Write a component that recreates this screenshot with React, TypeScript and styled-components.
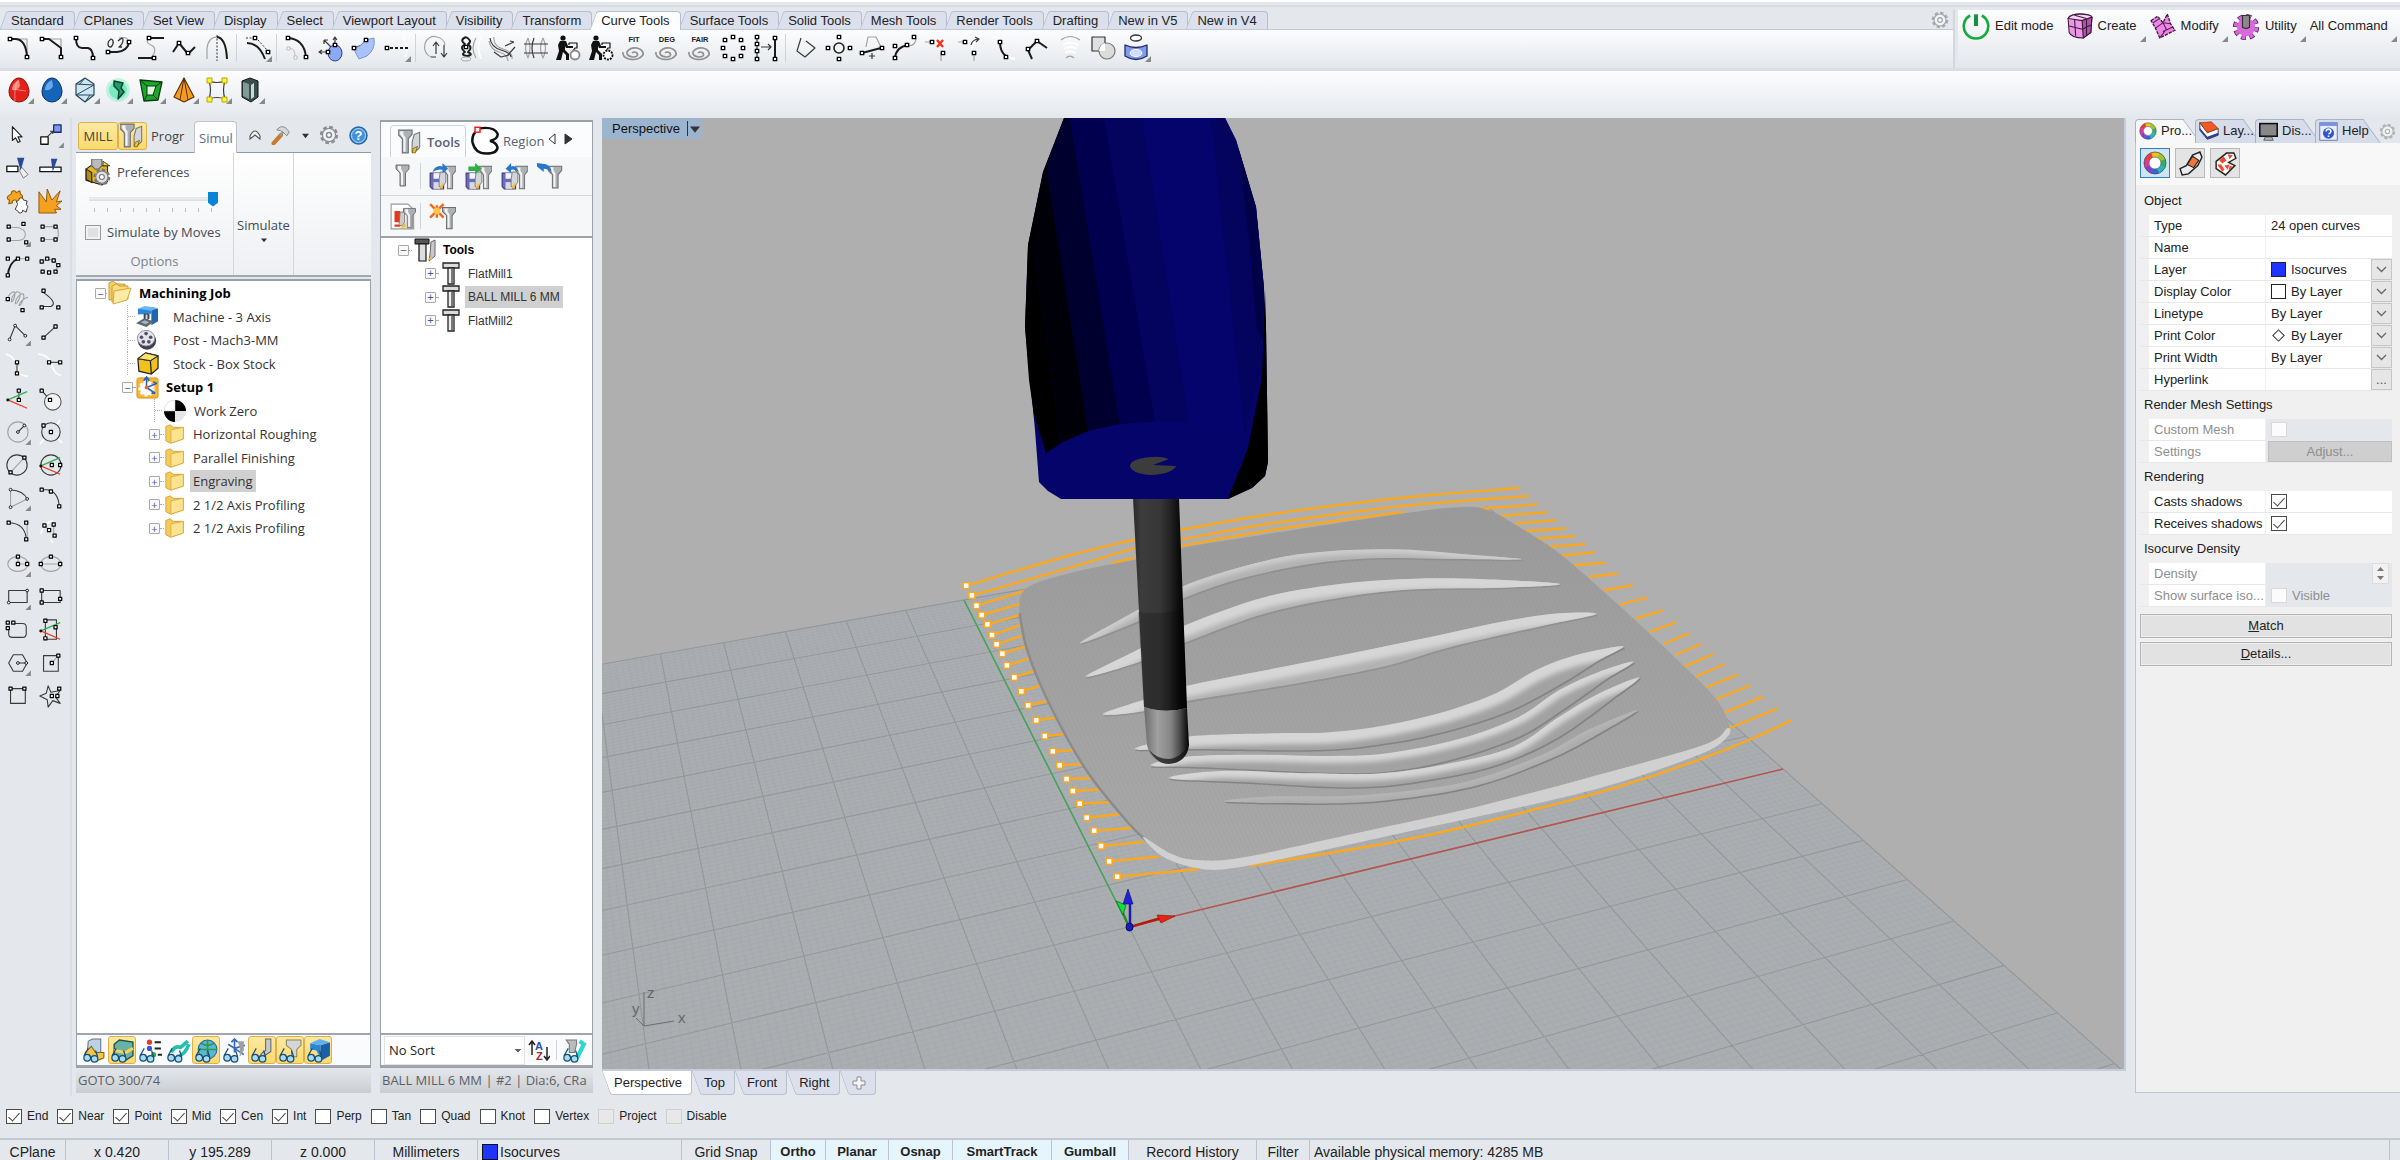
import React, { ReactNode } from "react";
import styled, { createGlobalStyle, css } from "styled-components";

const SANS = '"Liberation Sans", Arial, sans-serif';
const SEGOE = '"Open Sans", "Noto Sans", sans-serif';

const Global = createGlobalStyle`
  * { box-sizing: border-box; }
  body { margin: 0; background: #e4e8ed; color: #222; font: 13px/16px ${SANS}; }
  button, input, select { font: inherit; color: inherit; margin: 0; padding: 0; }
  button { background: none; border: 0; cursor: default; }
  ul { margin: 0; padding: 0; list-style: none; }
  svg { display: block; }
`;

/* ---------- layout ---------- */
const Page = styled.div`
  display: flex;
  flex-direction: column;
  min-height: 100vh;
  background: #e4e8ed;
`;
const TopBar = styled.header`
  display: flex;
  border-top: 2px solid #fff;
  border-bottom: 3px solid #d9dde5;
  padding-top: 8px;
  background: linear-gradient(#e4e8ed 3px, #d8dce4 3px, #d8dce4 5px, #e4e8ed 5px);
`;
const ToolTabsArea = styled.div`
  flex: 1;
  min-width: 0;
  border-right: 2px solid #d3d7df;
`;
const TabStrip = styled.div`
  display: flex;
  align-items: flex-end;
  height: 20px;
  padding-left: 1px;
  border-bottom: 1px solid #c3cad6;
`;
const StripGear = styled.button`
  margin-left: auto;
  margin-right: 4px;
`;
const ToolTab = styled.button<{ $on?: boolean }>`
  position: relative;
  height: 18px;
  padding: 1px 10px 0;
  white-space: nowrap;
  z-index: ${(p) => (p.$on ? 2 : 1)};
  &::before, &::after {
    content: "";
    position: absolute;
    top: 0;
    bottom: ${(p) => (p.$on ? "-1px" : "0")};
    z-index: -1;
    background: ${(p) => (p.$on ? "#fcfdfe" : "#dbe0ec")};
    border-top: 1px solid #b4bed0;
  }
  &::before { left: 2px; right: 12px; transform: skewX(-20deg); border-left: 1px solid #b4bed0; border-top-left-radius: 3px; }
  &::after { left: 12px; right: -1px; border-right: 1px solid #b4bed0; border-top-right-radius: 4px; }
`;
const ToolRow = styled.div`
  display: flex;
  align-items: center;
  height: 38px;
  padding: 0 0 3px 2px;
  background: linear-gradient(#fcfdfe, #e4e7ec);
`;
const IconButton = styled.button`
  display: grid;
  place-items: center;
  flex: none;
  width: 33px;
  height: 32px;
`;
const Divider = styled.span<{ $h?: number; $m?: number }>`
  flex: none;
  width: 1px;
  height: ${(p) => p.$h ?? 28}px;
  margin: 0 ${(p) => p.$m ?? 3}px;
  background: #cfd3da;
`;
const ActionArea = styled.div`
  display: flex;
  align-items: flex-start;
  gap: 13px;
  flex: none;
  width: 442px;
  margin-left: 3px;
  padding: 2px 0 0 4px;
  background: linear-gradient(#fcfdfe, #e4e7ec);
`;
const Action = styled.button<{ $menu?: boolean }>`
  position: relative;
  display: flex;
  align-items: center;
  gap: 5px;
  height: 28px;
  white-space: nowrap;
  &::after {
    content: "";
    display: ${(p) => (p.$menu ? "block" : "none")};
    position: absolute;
    right: -9px;
    bottom: -2px;
    border: 3px solid transparent;
    border-right-color: #888;
    border-bottom-color: #888;
  }
`;
const SolidRow = styled.div`
  display: flex;
  align-items: flex-start;
  height: 47px;
  padding: 3px 0 0 2px;
  background: linear-gradient(#fdfdfe, #e4e8ed);
`;
const Workspace = styled.main`
  display: flex;
  flex: 1;
  min-height: 0;
`;
const ToolColumn = styled.nav`
  display: grid;
  grid-template-columns: 33px 33px;
  grid-auto-rows: 33px;
  align-content: start;
  flex: none;
  width: 72px;
  border-right: 2px solid #d9dde4;
`;
const ToolCell = styled.button`
  display: grid;
  place-items: center;
`;
const Panel = styled.section<{ $w: number; $gap: number }>`
  display: flex;
  flex-direction: column;
  flex: none;
  width: ${(p) => p.$w}px;
  margin: 2px 0 3px ${(p) => p.$gap}px;
`;
const Frame = styled.div`
  display: flex;
  flex-direction: column;
  flex: 1;
  border: 1px solid #9aa0a8;
  border-top-width: 2px;
  background: #fff;
`;
const PanelStatus = styled.output`
  display: block;
  height: 25px;
  padding: 4px 2px;
  overflow: hidden;
  white-space: nowrap;
  font-family: ${SEGOE};
  color: #5c6066;
  background: linear-gradient(#e4e7eb, #cacdd1);
`;
const PanelTools = styled.div`
  display: flex;
  align-items: center;
  height: 34px;
  padding: 0 3px;
  border-top: 2px solid #a2a6ac;
  border-bottom: 2px solid #a2a6ac;
  background: #fafbfc;
`;

/* ---------- job panel ---------- */
const RibbonTabs = styled.div`
  display: flex;
  align-items: flex-end;
  height: 33px;
  padding: 0 3px 0 2px;
  font-family: ${SEGOE};
  color: #444;
  border-bottom: 1px solid #8d9bb0;
`;
const Toggle = styled.button<{ $on?: boolean; $w?: number }>`
  display: grid;
  place-items: center;
  width: ${(p) => p.$w ?? 28}px;
  height: 28px;
  margin-bottom: ${(p) => (p.$w ? 2 : 0)}px;
  ${(p) => p.$on && css`
    background: linear-gradient(#fde9a4, #fbd96b);
    border: 1px solid #dcb14c;
    border-radius: 3px;
  `}
`;
const RibbonTab = styled.button<{ $on?: boolean }>`
  width: 43px;
  height: 32px;
  padding: 0 3px 0 4px;
  text-align: left;
  margin-right: ${(p) => (p.$on ? 0 : 4)}px;
  ${(p) => p.$on && css`
    margin-bottom: -1px;
    color: #566b88;
    background: #fff;
    border: 1px solid #bcc3cf;
    border-bottom: 0;
    border-radius: 4px 4px 0 0;
  `}
`;
const RibbonIcons = styled.div`
  display: flex;
  align-items: center;
  justify-content: space-between;
  flex: 1;
  height: 34px;
  padding-left: 12px;
`;
const Ribbon = styled.div`
  display: flex;
  height: 124px;
  margin-bottom: 2px;
  font-family: ${SEGOE};
  color: #444b55;
  background: linear-gradient(#fff, #eef0f3);
  border-bottom: 2px solid #a3a9b2;
`;
const RibbonGroup = styled.div<{ $w: number }>`
  display: flex;
  flex-direction: column;
  align-items: center;
  gap: 4px;
  width: ${(p) => p.$w}px;
  padding-top: 64px;
  border-right: 1px solid #d4d8de;
`;
const OptionsGroup = styled(RibbonGroup)`
  align-items: flex-start;
  gap: 0;
  padding: 6px 0 0 9px;
`;
const Preferences = styled.button`
  display: flex;
  align-items: center;
  gap: 5px;
  height: 26px;
`;
const SliderBox = styled.div`
  width: 129px;
  margin: 5px 0 12px 4px;
`;
const Slider = styled.input`
  display: block;
  width: 100%;
  height: 18px;
  appearance: none;
  background: linear-gradient(transparent 7px, #d9dbde 7px, #eef0f1 8px, #d9dbde 11px, transparent 11px);
  &::-webkit-slider-thumb {
    appearance: none;
    width: 10px;
    height: 15px;
    background: #0a84d8;
    clip-path: polygon(0 0, 100% 0, 100% 75%, 50% 100%, 0 75%);
  }
`;
const Ticks = styled.div`
  display: flex;
  justify-content: space-between;
  padding: 0 6px 0 5px;
  i { width: 1px; height: 4px; background: #b9bcc0; }
`;
const CheckLabel = styled.label<{ $gap?: number }>`
  display: flex;
  align-items: center;
  gap: ${(p) => p.$gap ?? 5}px;
  white-space: nowrap;
`;
const OptionsTitle = styled.div`
  align-self: center;
  margin-top: 13px;
  padding-right: 9px;
  color: #7c838d;
`;
const Check = styled.input`
  position: relative;
  flex: none;
  appearance: none;
  width: 16px;
  height: 15px;
  border: 1px solid #4a4a4a;
  background: #fff;
  &:checked::after {
    content: "";
    position: absolute;
    left: 4px;
    top: 0;
    width: 5px;
    height: 10px;
    border: solid #444;
    border-width: 0 1px 1px 0;
    transform: rotate(42deg);
  }
  &:disabled { border-color: #cfcfcf; background: #e8e8e8; }
`;
const PaleCheck = styled(Check)`
  border-color: #96999e;
  box-shadow: inset 0 0 0 2px #f2f2f2;
  background: #dfe1e4;
`;
const WhiteCheck = styled(Check)`
  &:disabled { border-color: #d8d8d8; background: #fbfbfb; }
`;

/* ---------- trees ---------- */
const Tree = styled.ul`
  flex: 1;
  font-family: ${SEGOE};
  color: #333;
`;
const ToolTree = styled(Tree)`
  font-family: ${SANS};
  font-size: 12px;
`;
const TreeRow = styled.li<{ $in: number }>`
  display: flex;
  align-items: center;
  height: 24px;
  padding-left: ${(p) => p.$in}px;
  white-space: nowrap;
  &:nth-child(even) { height: 23px; }
`;
const Expander = styled.button`
  display: grid;
  place-items: center;
  flex: none;
  width: 11px;
  height: 11px;
  font-size: 11px;
  line-height: 9px;
  color: #3a5ba0;
  border: 1px solid #a9a9a9;
  border-radius: 1px;
  background: #fafafa;
`;
const Dots = styled.span<{ $w: number }>`
  flex: none;
  width: ${(p) => p.$w}px;
  margin-right: 1px;
  border-top: 1px dotted #aaa;
`;
const Guide = styled.span`
  align-self: stretch;
  flex: none;
  width: 0;
  border-left: 1px dotted #aaa;
`;
const TreeLabel = styled.span<{ $bold?: boolean; $sel?: boolean; $gap?: number }>`
  margin-left: ${(p) => p.$gap ?? 4}px;
  padding: 3px;
  font-weight: ${(p) => (p.$bold ? 700 : 400)};
  color: ${(p) => (p.$bold ? "#000" : "inherit")};
  background: ${(p) => (p.$sel ? "#d0d0d0" : "transparent")};
`;

/* ---------- tools panel ---------- */
const LibTabs = styled.div`
  display: flex;
  align-items: flex-end;
  height: 35px;
  padding-left: 9px;
  font-family: ${SEGOE};
  background: #fbfcfd;
`;
const LibTab = styled.button<{ $on?: boolean }>`
  display: flex;
  align-items: center;
  gap: 3px;
  width: ${(p) => (p.$on ? 76 : 82)}px;
  height: 32px;
  padding-left: ${(p) => (p.$on ? 7 : 4)}px;
  color: #566273;
  font-weight: ${(p) => (p.$on ? 600 : 400)};
  border: ${(p) => (p.$on ? "1px solid #cfd3d8" : "0")};
  border-bottom: 0;
  border-radius: 4px 4px 0 0;
`;
const LibArrows = styled.div`
  display: flex;
  align-items: center;
  gap: 7px;
  height: 36px;
`;
const LibRow = styled.div<{ $last?: boolean }>`
  display: flex;
  align-items: center;
  height: ${(p) => (p.$last ? 42 : 39)}px;
  padding-left: 8px;
  background: #f6f7f8;
  border-bottom: ${(p) => (p.$last ? "2px solid #a0a3a8" : "1px solid #d3d5d8")};
`;
const LibButton = styled.button<{ $w?: number }>`
  display: grid;
  place-items: center;
  width: ${(p) => p.$w ?? 36}px;
  height: 32px;
`;
const SortSelect = styled.select`
  width: 141px;
  height: 29px;
  padding: 0 4px;
  appearance: none;
  border: 1px solid #e0e2e5;
  background: linear-gradient(#666, #666) 130px 12px / 6px 1px no-repeat,
    linear-gradient(#666, #666) 131px 13px / 4px 1px no-repeat,
    linear-gradient(#666, #666) 132px 14px / 2px 1px no-repeat, #fff;
  font-family: ${SEGOE};
`;

/* ---------- viewport ---------- */
const ViewportColumn = styled.section`
  display: flex;
  flex-direction: column;
  flex: 1;
  min-width: 0;
  margin-left: 9px;
`;
const Viewport = styled.div`
  position: relative;
  flex: 1;
  min-height: 0;
  overflow: hidden;
  background: #afafaf;
  border-right: 2px solid #c5ccda;
  border-bottom: 2px solid #c5ccda;
  svg.scene { position: absolute; inset: 0; width: 100%; height: 100%; }
`;
const ViewTitle = styled.button`
  position: absolute;
  left: 0;
  top: 0;
  display: flex;
  align-items: center;
  gap: 7px;
  height: 21px;
  padding: 0 2px 0 10px;
  background: #9db4cf;
  color: #111;
`;
const ViewMenu = styled.span`
  display: grid;
  place-items: center;
  height: 15px;
  padding-left: 2px;
  border-left: 1px solid #333;
`;
const ViewTabs = styled.div`
  display: flex;
  height: 25px;
`;
const ViewTab = styled.button<{ $on?: boolean }>`
  position: relative;
  z-index: 1;
  height: 24px;
  padding: 0 10px 0 12px;
  &::before, &::after {
    content: "";
    position: absolute;
    top: 0;
    bottom: 0;
    z-index: -1;
    background: ${(p) => (p.$on ? "#fff" : "#dbe0ec")};
    border-bottom: 1px solid #b8c0ce;
  }
  &::before { left: 4px; right: 14px; transform: skewX(20deg); border-left: 1px solid #b8c0ce; border-bottom-left-radius: 3px; }
  &::after { left: 14px; right: 0; border-right: 1px solid #b8c0ce; border-bottom-right-radius: 4px; }
`;

/* ---------- property panel ---------- */
const PropPanel = styled.aside`
  display: flex;
  flex-direction: column;
  flex: none;
  width: 265px;
  margin: 1px 0 3px 9px;
`;
const PropTabs = styled.div`
  display: flex;
  align-items: stretch;
  height: 24px;
  overflow: hidden;
`;
const PropTab = styled.button<{ $on?: boolean }>`
  position: relative;
  z-index: 1;
  display: flex;
  align-items: center;
  gap: 4px;
  width: 60px;
  padding-left: 4px;
  white-space: nowrap;
  &::before, &::after {
    content: "";
    position: absolute;
    top: 0;
    bottom: 0;
    z-index: -1;
    background: ${(p) => (p.$on ? "#f8f8f8" : "#d6dcea")};
    border-top: 1px solid #a9b3c6;
  }
  &::before { left: 0; right: 14px; border-left: 1px solid #a9b3c6; border-top-left-radius: 4px; }
  &::after { left: 24px; right: 3px; transform: skewX(36deg); border-right: 1px solid #a9b3c6; }
`;
const PropBody = styled.div`
  display: flex;
  flex-direction: column;
  flex: 1;
  padding: 5px 8px 0 4px;
  border-left: 1px solid #bfc6d3;
  border-bottom: 1px solid #bfc6d3;
  background: linear-gradient(#f8f8f8 42px, #f0f0f0 42px);
`;
const PageButtons = styled.div`
  display: flex;
  gap: 5px;
  margin-bottom: 9px;
`;
const PageButton = styled.button<{ $on?: boolean }>`
  display: grid;
  place-items: center;
  width: 30px;
  height: 30px;
  background: ${(p) => (p.$on ? "#cfe4f5" : "#e4e4e4")};
  border: 1px solid ${(p) => (p.$on ? "#2f7fbd" : "#b8b8b8")};
`;
const GroupTitle = styled.h2`
  height: 28px;
  margin: 0;
  padding: 6px 4px;
  font: inherit;
  color: #222;
`;
const PropRow = styled.div<{ $off?: boolean }>`
  display: grid;
  grid-template-columns: 116px 1fr;
  gap: 1px;
  height: 22px;
  padding-left: 9px;
  border-bottom: 1px solid #e6e8ec;
  color: ${(p) => (p.$off ? "#8e8e8e" : "#222")};
`;
const PropName = styled.label`
  padding: 3px 5px 0;
  background: #fff;
  white-space: nowrap;
`;
const PropValue = styled.div<{ $off?: boolean }>`
  display: flex;
  align-items: center;
  gap: 5px;
  min-width: 0;
  padding-left: 5px;
  background: ${(p) => (p.$off ? "#e4e8ed" : "#fff")};
`;
const PropInput = styled.input`
  flex: 1;
  min-width: 0;
  border: 0;
  background: transparent;
  outline: none;
`;
const PropSelect = styled.select`
  flex: 1;
  min-width: 0;
  border: 0;
  appearance: none;
  background: transparent;
`;
const CellEnd = styled.span`
  display: grid;
  place-items: center;
  flex: none;
  align-self: stretch;
  width: 21px;
  background: #e6e6e6;
  border: 1px solid #c6c6c6;
`;
const CellButton = styled(CellEnd).attrs({ as: "button" })`
  margin-left: auto;
  color: #555;
  line-height: 10px;
`;
const Spin = styled(CellEnd)`
  width: 17px;
  margin-right: 3px;
  background: #f2f2f2;
  border-color: #ddd;
`;
const AdjustButton = styled.button`
  flex: 1;
  align-self: stretch;
  margin-left: -3px;
  background: #cfcfcf;
  border: 1px solid #c0c0c0;
`;
const Swatch = styled.span<{ $c: string }>`
  flex: none;
  width: 15px;
  height: 15px;
  background: ${(p) => p.$c};
  border: 1px solid #222;
`;
const Diamond = styled.span`
  flex: none;
  width: 9px;
  height: 9px;
  margin: 0 3px;
  border: 1px solid #333;
  transform: rotate(45deg);
`;
const PanelButtons = styled.div`
  display: grid;
  gap: 4px;
  padding-top: 7px;
`;
const WideButton = styled.button`
  height: 24px;
  background: #e2e2e2;
  border: 1px solid #b4b4b4;
  box-shadow: inset 0 0 0 1px #ededed;
`;

/* ---------- bottom ---------- */
const OsnapBar = styled.div`
  display: flex;
  align-items: center;
  gap: 9px;
  height: 42px;
  padding: 0 6px 2px;
  font-size: 12px;
`;
const StatusBar = styled.footer`
  display: flex;
  height: 22px;
  border-top: 2px solid #c3c8d3;
  font-size: 14px;
  line-height: 24px;
`;
const StatusCell = styled.button<{ $w?: number; $on?: boolean; $left?: boolean }>`
  display: flex;
  align-items: flex-start;
  justify-content: ${(p) => (p.$left ? "flex-start" : "center")};
  gap: 2px;
  flex: ${(p) => (p.$w ? "none" : "1")};
  width: ${(p) => (p.$w ? `${p.$w}px` : "auto")};
  padding: 0 4px;
  overflow: hidden;
  white-space: nowrap;
  line-height: 24px;
  font-size: ${(p) => (p.$on ? 13 : 14)}px;
  font-weight: ${(p) => (p.$on ? 700 : 400)};
  background: ${(p) => (p.$on ? "#e6f4fb" : "transparent")};
  border-right: 1px solid #bcc2cf;
`;
const StatusEnd = styled.span`
  width: 10px;
`;
const StatusSwatch = styled.span`
  width: 16px;
  height: 16px;
  margin-top: 4px;
  background: #1f35ff;
  border: 1px solid #111;
`;

/* ---------- line icons ---------- */
type Glyph = {
  n: string;
  k?: string; // black strokes
  t?: string; // thick strokes
  g?: string; // grey strokes
  w?: string; // white strokes
  d?: string; // dashed strokes
  q?: number[][]; // control points
  e?: ReactNode;
  c?: boolean; // has a fly-out
};
const sep = { n: "|" };

const LineIcon = ({ i, size = 26 }: { i: Glyph; size?: number }) => (
  <svg width={size} height={size} viewBox="0 0 26 26" fill="none" strokeLinejoin="round" overflow="visible">
    {i.w && <path d={i.w} stroke="#fff" strokeWidth={1.8} />}
    {i.g && <path d={i.g} stroke="#a2a2a2" strokeWidth={1.2} />}
    {i.d && <path d={i.d} stroke="#333" strokeDasharray="2 1.5" />}
    {i.k && <path d={i.k} stroke="#3a3a3a" strokeWidth={1.2} />}
    {i.t && <path d={i.t} stroke="#1c1c1c" strokeWidth={2} />}
    {i.e}
    {i.q?.map(([x, y]) => (
      <rect key={`${x},${y}`} x={x - 1.7} y={y - 1.7} width={3.4} height={3.4} fill="#fff" stroke="#000" strokeWidth={1.3} />
    ))}
    {i.c && <path d="M28 21V27H22Z" fill="#888" />}
  </svg>
);

const spiral = (word: string): ReactNode => (
  <>
    <text x="13" y="7" fontSize="7.5" fontWeight="700" textAnchor="middle" fill="#222" fontFamily={SANS}>{word}</text>
    <path d="M11 18Q13 16 16 18Q18 22 12 22Q5 21 6 17Q9 12 16 13Q23 15 22 20Q17 26 8 24Q1 22 2 17" stroke="#8f8f8f" strokeWidth="1.7" />
  </>
);
const walker = (loop: boolean): ReactNode => (
  <>
    <circle cx="8" cy="3" r="2.6" fill="#111" />
    <path d="M5 6H11L13 11H18V13H11L10 11V15L14 19V25H11V20L8 17L6 25H1L4 16L3 10Z" fill="#111" />
    <path d="M14 10V8H22V13H20L18 16" stroke="#111" strokeWidth="1.2" />
    <circle cx="20" cy="20" r="4.5" fill="#fff" stroke={loop ? "#111" : "#888"} strokeWidth="1.8" strokeDasharray={loop ? "2 1" : undefined} />
  </>
);

const CURVE_TOOLS: Glyph[] = [
  { n: "Fillet curves", g: "M4 4H21V22", t: "M4 4H10Q20 5 21 22", q: [[4, 4], [21, 22]] },
  { n: "Chamfer curves", g: "M4 4H22V22", t: "M3 4H10L22 13V22", q: [[3, 4], [22, 22]] },
  { n: "Blend curves", t: "M4 3Q4 13 10 13H16Q21 14 21 23", q: [[4, 3], [21, 23]] },
  { n: "Arc blend", g: "M14 3Q23 1 24 7", t: "M5 17H12Q22 16 24 8", q: [[3, 17], [24, 7]], e: <path d="M5 5Q7 3 8 6T6 12Q3 12 3 9T5 5M13 6Q18 1 18 5T14 12H17" stroke="#333" strokeWidth="1.3" /> },
  { n: "Adjustable blend", g: "M12 3Q6 7 13 10T14 22", t: "M10 3H26M0 23H16", q: [[11, 3], [16, 23]] },
  { n: "Match curve", t: "M2 17L8 8L17 19L24 12", q: [[8, 8], [17, 18]] },
  { n: "Symmetry", g: "M3 24V14Q4 2 13 2", d: "M13 0V26", t: "M13 2Q22 3 23 24" },
  sep,
  { n: "Extend curve", d: "M2 3H12M14 5L24 16", t: "M3 8Q15 8 21 24", q: [[11, 3], [24, 17]], c: true },
  sep,
  { n: "Offset curve", t: "M4 3Q20 4 22 22", q: [[4, 3], [22, 22]], e: <><path d="M5 13Q11 13 11 21" stroke="#bbb" /><path d="M3 12h3v3h-3zM10 21h3v3h-3z" stroke="#bbb" fill="#fff" /></> },
  { n: "Offset normal", k: "M14 12L7 5M7 5V9M7 5H11M18 9V3M16 5L18 2L20 5M10 17H3M5 15L2 17L5 19", e: <ellipse cx="18" cy="18" rx="7" ry="8" fill="#8caaf4" stroke="#2d3f8a" />, q: [[18, 10], [11, 17]] },
  { n: "Curve from surface", e: <path d="M3 13Q12 12 15 5L24 3Q26 14 17 21L9 24Z" fill="#a9c2fa" stroke="#7f95cc" />, t: "M4 13Q13 12 16 5", q: [[4, 13], [16, 5]] },
  { n: "Dashed extend", w: "M20 2Q27 12 22 22", t: "M7 13H10M12 13H15M17 13H20M22 13H25", q: [[4, 13]], c: true },
  sep,
  { n: "Close curve", g: "M14 2A9 10 0 1 0 8 22M14 2A10 9 0 0 1 22 10", k: "M13 19V8M10 11L13 7L16 11M21 10V21M18 18L21 22L24 18M8 22H13" },
  { n: "Cross-section", g: "M20 3Q14 13 20 23", w: "M25 2Q20 13 25 24", t: "M10 2Q3 5 9 9Q3 13 9 17Q4 20 11 21Q18 20 12 17Q17 13 12 9Q17 6 10 2", e: <ellipse cx="10" cy="24" rx="5" ry="2" stroke="#aaa" />, q: [[10, 12]] },
  { n: "Tween curves", g: "M5 2Q4 11 14 14T23 24M0 6Q2 15 10 17T19 26", k: "M1 3Q2 12 12 15T22 22M16 11L25 7M25 7L21 6M18 21L26 12M5 17L12 22L20 20" },
  { n: "Mean curve", g: "M6 3Q1 13 6 23M6 3Q10 13 6 23M21 3Q16 13 21 23Q26 13 21 3", k: "M2 9H26M2 18H26M12 3Q8 13 12 23" },
  { n: "Project walk", e: walker(false) },
  { n: "Project walk loop", e: walker(true) },
  { n: "Fit", e: spiral("FIT") },
  { n: "Degree", e: spiral("DEG") },
  { n: "Fair", e: spiral("FAIR") },
  { n: "Rebuild", q: [[13, 2], [5, 5], [21, 5], [3, 13], [23, 13], [5, 21], [21, 21], [13, 24]] },
  { n: "Rebuild master", t: "M22 3V24", k: "M4 2V24M8 12H18M15 9L18 12L15 15", q: [[4, 2], [4, 9], [4, 16], [4, 24], [22, 3], [22, 24]] },
  sep,
  { n: "Polyline", k: "M8 3L4 16L12 22L22 13L13 6" },
  { n: "Insert knots", w: "M13 3A10 10 0 0 1 23 13", e: <circle cx="13" cy="13" r="5" fill="#f5f5f5" stroke="#222" strokeWidth="1.6" />, q: [[13, 2], [2, 13], [24, 13], [13, 24]] },
  { n: "Add line segment", g: "M7 12L9 2H17L22 12", t: "M3 18L22 13", k: "M13 18V24M10 21H16", q: [[3, 18], [23, 13]] },
  { n: "Subcurve", g: "M17 11Q24 10 24 3", t: "M3 23Q4 12 16 10", q: [[3, 23], [3, 11], [15, 10], [22, 2]] },
  { n: "Delete knot", g: "M0 7H6M16 18V26", q: [[7, 7], [18, 18]], e: <path d="M12 5L18 12M18 5L12 12" stroke="#f0301c" strokeWidth="2.4" /> },
  { n: "Move knot", g: "M0 7H6M16 18V26", q: [[7, 7], [16, 18]], w: "M14 14Q16 5 22 4", k: "M13 10Q14 5 20 4M17 2L21 4L18 7" },
  { n: "Soft edit", w: "M2 2Q9 2 10 7M16 20Q20 24 24 24", t: "M9 7Q9 17 15 21", q: [[9, 7], [15, 22]] },
  { n: "Edit handle", t: "M8 24L4 15L13 6L23 13", q: [[4, 14], [13, 6]] },
  { n: "Simplify", g: "M4 5Q13 -2 23 5M9 23Q13 19 17 23", w: "M6 10Q13 5 21 10M7 14Q13 10 20 14M8 18Q13 15 19 18" },
  { n: "Curve boolean", e: <><path d="M2 2H15V16H2Z" fill="#e0e0e0" stroke="#333" strokeWidth="1.2" /><circle cx="17" cy="16" r="8" fill="#dcdcdc" stroke="#777" strokeWidth="1.2" /><path d="M15 8V16H9Q10 9 15 8" fill="#fff" /></> },
  { n: "Pull curve", c: true, e: <><ellipse cx="13" cy="3" rx="5.5" ry="3" stroke="#333" strokeWidth="1.3" fill="#fff" /><path d="M2 10Q13 15 24 10V21Q13 28 2 21Z" fill="#7f9cf0" stroke="#1f2a66" strokeWidth="1.3" /><ellipse cx="13" cy="18" rx="6" ry="3.5" fill="#cfdcff" stroke="#fff" /></> },
];

const egg = "M13 1C19 1 23 9 23 15A10 10 0 0 1 3 15C3 9 7 1 13 1Z";
const SOLIDS: Glyph[] = [
  { n: "Red egg", c: true, e: <><path d={egg} fill="#e32119" stroke="#8d120c" /><path d="M13 3Q6 6 6 13Q12 14 14 9Z" fill="#f78a80" /><path d="M6 12L20 14M12 3Q8 10 9 24" stroke="#f9c0bb" strokeWidth=".6" /></> },
  { n: "Blue egg", c: true, e: <><path d={egg} fill="#1464b8" stroke="#0c2e63" /><path d="M13 3Q6 6 6 13Q12 14 14 9Z" fill="#67a8ea" /></> },
  { n: "Hexa glass", c: true, e: <><path d="M13 1L22 7V18L13 25L4 18V7Z" fill="#cfe6f4" stroke="#27485e" strokeWidth="1.2" /><path d="M4 7L22 8L4 18L22 18M13 1L7 8M13 25L18 18" stroke="#27485e" /></> },
  { n: "Glow", c: true, e: <><circle cx="13" cy="13" r="12" fill="#2ee6a0" opacity=".25" /><circle cx="13" cy="13" r="9" fill="#2ee6a0" opacity=".5" /><path d="M9 4L18 6L16 11L19 15L13 22L14 14L9 9Z" fill="#1f9c6c" stroke="#0b3d2a" strokeWidth="1.4" /></> },
  { n: "Emerald", c: true, e: <><path d="M2 3L24 5L20 23L6 24Z" fill="#1da62c" stroke="#0b3b10" strokeWidth="1.3" /><path d="M9 9L18 9L15 18L9 18Z" fill="#dff5df" stroke="#0b3b10" /><path d="M2 3L9 9M24 5L18 9M20 23L15 18M6 24L9 18" stroke="#0b3b10" /></> },
  { n: "Pyramid", c: true, e: <><path d="M13 1L23 20L13 25L3 20Z" fill="#f59a23" stroke="#5d3207" strokeWidth="1.2" /><path d="M13 1L9 23M13 1L17 23" stroke="#5d3207" /></> },
  { n: "Cage", c: true, k: "M5 4Q13 7 21 4Q18 13 21 22Q13 19 5 22Q8 13 5 4Z", e: <g fill="#fff33b" stroke="#b5a800"><rect x="3" y="1" width="5" height="5" /><rect x="18" y="1" width="5" height="5" /><rect x="3" y="20" width="5" height="5" /><rect x="18" y="20" width="5" height="5" /></g> },
  { n: "Slab", c: true, e: <><path d="M5 4L13 1L21 4V20L14 25L5 20Z" fill="#3a4f4c" stroke="#111" /><path d="M6 5L12 7V22L6 19Z" fill="#7f9b96" /><path d="M14 8L17 6V20L14 22Z" fill="#c9dad6" /></> },
];

const Axes = () => <><path d="M3 14L24 5" stroke="#2fae49" strokeWidth="1.4" /><path d="M3 14L24 23" stroke="#f03a28" strokeWidth="1.4" /><circle cx="3" cy="14" r="1.6" fill="#111" /></>;
const Dot = ({ at }: { at: number[][] }) => <g fill="#fff" stroke="#111">{at.map(([x, y]) => <circle key={`${x} ${y}`} cx={x} cy={y} r="1.5" />)}</g>;
const MODEL_TOOLS: Glyph[] = [
  { n: "Select", e: <path d="M8 4V19L11.500 16L14 21L16.500 20L14 15H18.500Z" fill="#fff" stroke="#222" strokeWidth="1.2" /> },
  { n: "Points on", c: true, k: "M9 16L16 9M13 9H16V12", e: <><rect x="3" y="15" width="8" height="8" fill="#fff" stroke="#111" strokeWidth="1.4" /><rect x="17" y="2" width="8" height="8" fill="#7d9af2" stroke="#1b2a6b" strokeWidth="1.4" /></> },
  { n: "Trim", e: <><path d="M2 11H14V17H2Z" fill="#fff" stroke="#111" strokeWidth="1.4" /><path d="M15 15L18 12L25 20L20 24Z" fill="#eee" stroke="#777" /><path d="M13 2H21L17 16Z" fill="#2b489c" /></> },
  { n: "Split", e: <><path d="M2 12H25V17H2Z" fill="#fff" stroke="#111" strokeWidth="1.4" /><path d="M14 3H21L16 17Z" fill="#2b489c" /></> },
  { n: "Join", e: <><path d="M7 5A2.500 2.500 0 0 1 12 4L16 2L17 6A2.500 2.500 0 0 1 16 11L17 15L13 14A2.500 2.500 0 0 0 8 15L4 16L5 12A2.500 2.500 0 0 1 3 8Z" fill="#f5a623" stroke="#9a6208" strokeWidth="1.2" /><path d="M15 12A2.500 2.500 0 0 1 20 12L24 13L23 17A2.500 2.500 0 0 1 24 21L23 25L19 23A2.500 2.500 0 0 1 14 24L11 22L13 18A2.500 2.500 0 0 0 12 14Z" fill="#fff" stroke="#333" /></> },
  { n: "Explode", e: <path d="M1 3L9 14L10 0L15 12L24 2L20 14L26 13L20 18L25 22L18 22L20 26H1Z" fill="#f5a01f" stroke="#8a5206" /> },
  { n: "Control curve", g: "M5 6H14Q22 8 22 13Q22 20 14 20H5", q: [[4, 5], [20, 2], [4, 19], [23, 22]], c: true },
  { n: "Interpolate", g: "M5 5H21Q23 13 21 19H5", q: [[5, 5], [19, 5], [5, 19], [19, 19]] },
  { n: "Conic", g: "M14 4H24", t: "M3 23Q4 8 14 4", q: [[3, 4], [14, 4], [24, 4], [3, 22]] },
  { n: "Interpolate on surface", q: [[4, 7], [10, 4], [17, 6], [22, 11], [19, 18], [12, 19], [5, 18]], g: "M5 7L10 4L17 6L22 11L19 18" },
  { n: "Helix", g: "M3 10Q8 2 11 5Q10 14 7 15Q6 10 13 4Q18 4 16 10Q13 18 11 17Q12 9 19 6Q22 8 19 14Q17 19 15 19Q17 12 25 10", q: [[3, 12], [19, 24]] },
  { n: "Parabola", k: "M6 5Q22 16 14 20H6", q: [[6, 3], [4, 21], [22, 21]] },
  { n: "Polyline", k: "M5 20L11 5L23 17", e: <Dot at={[[5, 20], [11, 5], [22, 16]]} />, c: true },
  { n: "Line", k: "M6 18L18 7", q: [[6, 18], [19, 6]] },
  { n: "Normal line", w: "M1 0Q12 3 15 20Q18 24 25 24", k: "M13 9V21", q: [[13, 9], [13, 21]] },
  { n: "Tangent line", w: "M0 0Q12 1 15 12T25 23", k: "M12 9H24", q: [[12, 9], [24, 9]] },
  { n: "Line by axes", e: <Axes />, k: "M15 5V15", q: [[15, 4], [15, 14]] },
  { n: "Tangent circle", e: <circle cx="16" cy="16" r="9" fill="#f3f3f3" stroke="#555" strokeWidth="1.2" />, k: "M5 5L13 14", q: [[4, 4], [13, 14]] },
  { n: "Circle", g: "M25 13A11 11 0 1 0 3 13A11 11 0 0 0 25 13", k: "M14 13L21 6", c: true, e: <Dot at={[[14, 13], [21, 6]]} /> },
  { n: "Circle points", w: "M24 0L20 6M22 20L26 25M7 20L2 26", k: "M24 13A10 10 0 1 0 4 13A10 10 0 0 0 24 13", q: [[6, 6], [14, 13]] },
  { n: "Circle diameter", k: "M24 13A11 11 0 1 0 2 13A11 11 0 0 0 24 13", g: "M6 21L21 5", q: [[6, 21], [21, 5]] },
  { n: "Circle axes", k: "M25 13A11 11 0 1 0 3 13A11 11 0 0 0 25 13", e: <Axes />, q: [[15, 13], [24, 13]] },
  { n: "Arc", g: "M24 14L6 23V4", k: "M6 4Q20 5 24 14", e: <Dot at={[[6, 4], [24, 14], [6, 23]]} />, c: true },
  { n: "Arc points", k: "M5 4H10Q22 6 23 22", q: [[4, 4], [14, 6], [23, 22]] },
  { n: "Arc end", g: "M24 4V22", k: "M5 4Q22 5 23 22", q: [[4, 4], [23, 4], [23, 22]] },
  { n: "Arc series", w: "M3 16Q6 4 16 2M14 22L16 26", q: [[7, 7], [17, 6], [12, 12], [18, 18]], g: "M17 6V18M7 7L12 12" },
  { n: "Ellipse", g: "M25 13A11 8 0 1 0 3 13A11 8 0 0 0 25 13M14 5V13H24", q: [[14, 5], [14, 13], [24, 13]], c: true },
  { n: "Ellipse diameter", g: "M25 13A11 8 0 1 0 3 13A11 8 0 0 0 25 13M3 13H25", q: [[14, 5], [3, 13], [24, 13]] },
  { n: "Rectangle", k: "M4 6H24V19H4Z", e: <Dot at={[[24, 6], [4, 19]]} />, c: true },
  { n: "Rectangle 3 point", k: "M4 6H24V19H4Z", q: [[4, 6], [4, 19], [24, 15]] },
  { n: "Rounded rectangle", k: "M7 6H19Q23 6 23 10V17Q23 21 19 21H8Q4 21 4 17V11", q: [[3, 5], [9, 5], [3, 11]] },
  { n: "Vertical rectangle", k: "M8 2H20V23H8Z", e: <Axes />, q: [[8, 3], [19, 10], [8, 22]] },
  { n: "Polygon", k: "M4 13L9 4H19L24 13L19 22H9Z", c: true, e: <><path d="M14 13H24" stroke="#222" /><Dot at={[[14, 13], [23, 13]]} /></> },
  { n: "Square centre", k: "M6 5H22V22H6Z", g: "M15 13L22 5", q: [[15, 13], [22, 5]] },
  { n: "Square edge", k: "M6 5H22V21H6Z", q: [[6, 5], [21, 5]] },
  { n: "Star", k: "M11 2L14 9L24 7L19 14L24 21L16 18L11 25L10 17L2 13L9 10Z", q: [[15, 13], [21, 13], [23, 5]] },
];

/* ---------- picture icons ---------- */
const Svg = ({ s = 24, children }: { s?: number; children: ReactNode }) => (
  <svg width={s} height={s} viewBox="0 0 24 24" fill="none">{children}</svg>
);
const Gear = ({ s = 18, c = "#8a8d92" }: { s?: number; c?: string }) => (
  <Svg s={s}>
    <circle cx="12" cy="12" r="9.5" stroke={c} strokeWidth="3" strokeDasharray="4.4 3.06" />
    <circle cx="12" cy="12" r="8" fill="#f2f3f5" stroke={c} strokeWidth="1.6" />
    <circle cx="12" cy="12" r="3" fill="#fff" stroke={c} strokeWidth="1.8" />
  </Svg>
);
const holder = "M0 1H13V5L9.500 9V22H4V9L0 5Z";
const Mill = ({ at = "" }: { at?: string }) => (
  <g transform={at}>
    <path d={holder} fill="#aeb1b4" stroke="#6c6f73" />
    <path d="M2 2H5V5L7 8V21H5V9L2 5Z" fill="#f4f4f4" />
  </g>
);
const Holder = () => <Svg s={24}><Mill at="translate(5 0)" /></Svg>;
const Kit = () => (
  <Svg s={26}><Mill /><path d="M15 5L20 3V17L16 21H13V12Z" fill="#d3d6d9" stroke="#777" /><path d="M14 18L18 16L16 22H13Z" fill="#f2c230" stroke="#6a5510" strokeWidth=".7" /></Svg>
);
const DiskTool = ({ kind }: { kind: "load" | "go" | "save" }) => (
  <Svg s={27}>
    <path d="M1 9H13V23H3L1 21Z" fill="#6d6bb8" stroke="#3f3d85" /><path d="M4 9H11V14H4Z" fill="#f4f4fb" /><path d="M4 17H10V23H4Z" fill="#d8dbe4" />
    <path d="M10 8H15V17L12 21H9V14Z" fill="#d3d6d9" stroke="#777" strokeWidth=".8" />
    <Mill at="translate(13 2) scale(.84 .95)" />
    <path d="M9 22L13 17L12 23Z" fill="#f2c230" />
    {kind === "load" && <path d="M3 8Q6 1 12 3V0L17 5L12 9V6Q7 5 3 8" fill="#2577cc" />}
    {kind === "go" && <path d="M3 3H9V0L15 5L9 10V7H3Z" fill="#2faf46" />}
    {kind === "save" && <path d="M16 8Q13 1 9 3V0L4 5L9 9V6Q12 5 16 8" fill="#2577cc" />}
  </Svg>
);
const UndoTool = () => <Svg s={27}><Mill at="translate(10 2) scale(.92)" /><path d="M13 9Q11 5 6 5V8L0 3L0 0L8 1Q13 3 13 9" fill="#2577cc" /></Svg>;
const ReportTool = () => <Svg s={27}><path d="M1 1H16L21 6V23H1Z" fill="#fff" stroke="#999" /><path d="M4 7H9V17H4ZM4 19H9V21H4Z" fill="#e03a1c" /><path d="M9 8H13V17L11 20H8Z" fill="#ccc" stroke="#777" strokeWidth=".8" /><Mill at="translate(12 4) scale(.82)" /><path d="M9 22L14 17V22Z" fill="#f2c230" /></Svg>;
const NewTool = () => <Svg s={27}><Mill at="translate(12 3) scale(.9)" /><path d="M1 1L13 13M13 1L1 13M7 2V13" stroke="#f06a1a" strokeWidth="2.2" /><circle cx="7" cy="7" r="3" fill="#ffc24a" /></Svg>;
const RegionIcon = () => (
  <Svg s={30}><path d="M7 2Q1 7 2 13Q4 22 13 22Q22 22 22 17Q21 13 16 12Q23 10 22 6Q19 0 7 2Z" fill="#fff" stroke="#111" strokeWidth="2" /><rect x="4" y="1" width="4" height="4" fill="#fff" stroke="#e22" strokeWidth="1.2" /></Svg>
);
const TreeMill = () => <Svg s={24}><path d="M4 1H20V6H4Z" fill="#d9dbdd" stroke="#222" strokeWidth="1.3" /><path d="M9 6H15V22H9Z" fill="#eee" stroke="#222" strokeWidth="1.3" /><path d="M13 7V21" stroke="#555" strokeWidth="1.5" /></Svg>;
const TreeKit = () => <Svg s={24}><path d="M2 1H16V6H2Z" fill="#555" stroke="#111" /><path d="M6 6H13V23H6Z" fill="#ddd" stroke="#111" strokeWidth="1.2" /><path d="M18 4L22 2V18L16 23L17 16Z" fill="#c7cacd" stroke="#666" /><path d="M15 22L19 17V21Z" fill="#f2c230" /></Svg>;
const Folder = () => (
  <Svg s={20}><path d="M1 3L6 1L10 4H22V18L7 23L1 20Z" fill="#f2cc5c" stroke="#d39b2b" /><path d="M7 7L22 4V18L7 23Z" fill="#fbe391" stroke="#dba93a" /></Svg>
);
const Folders = () => (
  <Svg s={24}><path d="M1 2L5 0L9 3H17V17L1 19Z" fill="#f3d06a" stroke="#cf9a2e" /><path d="M4 5L8 3L12 5H20V18L4 21Z" fill="#f8da7d" stroke="#cf9a2e" /><path d="M6 10L23 7L19 19L5 23Z" fill="#fdeaa6" stroke="#d8a638" /></Svg>
);
const MachineIcon = () => <Svg s={23}><path d="M2 4L16 2V9L2 10Z" fill="#2c86d8" /><path d="M16 2L23 4V17L16 21Z" fill="#1d66ad" /><path d="M2 4L9 1L23 3L16 6Z" fill="#6ab6f4" /><path d="M8 9H14V14L11 17L8 14Z" fill="#39424c" /><path d="M10 10H12V15H10Z" fill="#cfd6dc" /><path d="M0 19L8 14L19 17L11 23Z" fill="#5d6873" /><path d="M5 18L9 16L14 18L10 20Z" fill="#aab3bb" /></Svg>;
const ReelIcon = () => <Svg s={22}><ellipse cx="12" cy="13" rx="10" ry="9.5" fill="#3f4250" /><ellipse cx="11" cy="10" rx="9.5" ry="8.5" fill="#e4e5ea" stroke="#8b8d98" /><g fill="#4c4f66"><circle cx="11" cy="5" r="2" /><circle cx="6" cy="9" r="2" /><circle cx="16" cy="9" r="2" /><circle cx="8" cy="14" r="2" /><circle cx="14" cy="14" r="2" /></g></Svg>;
const BoxIcon = () => <Svg s={23}><path d="M2 7L10 1L23 4V17L16 23L3 20Z" fill="#f0c21c" stroke="#222" strokeWidth="1.3" /><path d="M2 7L15 9L23 4M15 9L16 23" stroke="#222" strokeWidth="1.3" /><path d="M2 7L10 1L23 4L15 9Z" fill="#f8e06a" stroke="#222" /></Svg>;
const SetupIcon = () => <Svg s={23}><rect x="1" y="2" width="22" height="21" rx="2" fill="#f7b535" stroke="#e08e12" /><circle cx="11" cy="13" r="7" fill="#fff" stroke="#fff" strokeWidth="3" strokeDasharray="3 2" /><path d="M11 12V2M8 5L11 1L14 5M11 12L21 8M18 6L22 8M11 12L20 18M20 18H16" stroke="#2863b8" strokeWidth="1.6" /><circle cx="11" cy="12" r="2" fill="#f06a1a" /></Svg>;
const ZeroIcon = () => <Svg s={24}><circle cx="12" cy="12" r="11" fill="#e6e6e6" /><path d="M12 12V1A11 11 0 0 1 23 12ZM12 12V23A11 11 0 0 1 1 12Z" fill="#000" /><path d="M12 12V1A11 11 0 0 0 1 12Z" fill="#fff" stroke="#ccc" strokeWidth=".5" /></Svg>;
const PrefIcon = () => <Svg s={27}><path d="M1 9L5 6H20V20L15 23L1 19Z" fill="#e3b71d" stroke="#222" /><path d="M1 9L6 12V21L1 18Z" fill="#b58d0d" stroke="#222" /><path d="M6 0H15V6L12 9H9L6 6Z" fill="#b9bcbf" stroke="#666" /><path d="M16 2L22 6H16Z" fill="#ffd52e" stroke="#222" strokeWidth=".7" /><circle cx="15" cy="16" r="6" fill="#ddd" stroke="#777" strokeWidth="3" strokeDasharray="2.7 2" /><circle cx="15" cy="16" r="5.5" fill="#dfe1e3" stroke="#777" /><circle cx="15" cy="16" r="2.2" fill="#fff" stroke="#777" /></Svg>;
const Hammer = () => <Svg s={20}><path d="M3 22L12 12" stroke="#c77b2c" strokeWidth="5" strokeLinecap="round" /><path d="M11 13L15 8" stroke="#999" strokeWidth="3" /><path d="M7 6Q11 0 17 3L22 8L19 13L15 9Q12 6 7 6Z" fill="#d5d7da" stroke="#777" /></Svg>;
const Help = () => <svg width="19" height="19" viewBox="0 0 19 19"><circle cx="9.500" cy="9.500" r="8.5" fill="#3f93d8" stroke="#2467a6" strokeWidth="1.5" /><circle cx="9.500" cy="9.500" r="7" fill="none" stroke="#b7d9f3" /><text x="9.500" y="14" fontSize="13" fontWeight="700" textAnchor="middle" fill="#fff" fontFamily={SANS}>?</text></svg>;
const Chevrons = () => <svg width="12" height="12" viewBox="0 0 12 12" fill="#f5f5f5" stroke="#555" strokeWidth="1.1"><path d="M1 7Q6 -3 11 7V10L6 6L1 10Z" /></svg>;
const Caret = ({ w = 8 }: { w?: number }) => <svg width={w} height={w} viewBox="0 0 8 8"><path d="M0 2H8L4 7Z" fill="#333" /></svg>;
const Arrow = ({ open }: { open?: boolean }) => <svg width="9" height="12" viewBox="0 0 9 12"><path d={open ? "M7 1V11L1 6Z" : "M1 1V11L8 6Z"} fill={open ? "none" : "#333"} stroke="#333" /></svg>;
const Spec = ({ children }: { children: ReactNode }) => (
  <Svg s={25}>
    {children}
    <g fill="#a8dcf5" stroke="#174e74" strokeWidth="1.2"><circle cx="5" cy="19" r="3.2" /><circle cx="12" cy="20" r="3.2" /><path d="M2 17L6 10M15 18L13 12" /></g>
  </Svg>
);
const SPECS: [string, boolean, ReactNode][] = [
  ["Stock", false, <><path d="M6 3L10 1H18V16L12 20L5 15Z" fill="#b9d2e6" stroke="#6d7681" /><path d="M3 14L9 8L13 14H21V19L14 22L3 18Z" fill="#f5c544" stroke="#80621a" /></>],
  ["Simulation stock", true, <><path d="M4 6L9 2L22 4V17L14 22L4 18Z" fill="#69b3a5" stroke="#1e4f4a" strokeWidth="1.3" /><path d="M4 12L15 14L22 10" stroke="#f5d25a" strokeWidth="3" /></>],
  ["Levels", false, <><circle cx="11" cy="4" r="2.5" fill="#e03a2e" /><circle cx="11" cy="10" r="2.5" fill="#3c53c9" /><circle cx="15" cy="16" r="2.5" fill="#2fae49" /><path d="M16 4H22M16 10H22M19 16H23" stroke="#222" strokeWidth="2" /></>],
  ["Toolpath", false, <path d="M5 14Q8 7 14 9L21 3M10 18Q18 17 22 6" stroke="#23bfae" strokeWidth="3.5" />],
  ["World", true, <><circle cx="13" cy="11" r="9" fill="#5db7d4" stroke="#2563a5" /><path d="M13 2V20M4 11H22M7 5Q13 9 19 5" stroke="#2f9a4a" strokeWidth="1.6" /></>],
  ["Axes", false, <><path d="M12 14V1M9 4L12 1L15 4M12 10L22 7M12 10L21 16M6 6L12 10" stroke="#3767b5" strokeWidth="1.6" /><path d="M15 3H21V12L17 18V9Z" fill="#9da1a5" /></>],
  ["Tool", true, <path d="M15 1H20V13L14 17L8 19L12 14L15 12Z" fill="#c6cacd" stroke="#5f6468" />],
  ["Holder", true, <path d="M8 2H22V7L18 11V18H13V11L8 7Z" fill="#d4d7d9" stroke="#8a8256" />],
  ["Machine", true, <><path d="M4 5L14 7V20L10 12L4 11Z" fill="#2b86d9" /><path d="M14 7L23 4V17L14 22Z" fill="#1b5fa8" /><path d="M4 5L13 1L23 4L14 7Z" fill="#5db0f2" /></>],
];
const WHEEL = ["#f6c01c", "#9ac72c", "#2fb457", "#27b6c4", "#3466d6", "#8a3bc9", "#e0379d", "#ee3b34"];
const ColorWheel = ({ s }: { s: number }) => (
  <Svg s={s}>
    {WHEEL.map((c, i) => {
      const a = ((i * 45 - 112) * Math.PI) / 180, b = a + 0.82;
      return <path key={c} d={`M${12 + 8.5 * Math.cos(a)} ${12 + 8.5 * Math.sin(a)}A8.5 8.5 0 0 1 ${12 + 8.5 * Math.cos(b)} ${12 + 8.5 * Math.sin(b)}`} stroke={c} strokeWidth="5" />;
    })}
    <circle cx="12" cy="12" r="11" stroke="#444" strokeWidth=".7" />
    <circle cx="12" cy="12" r="6" fill="#fff" stroke="#555" strokeWidth=".7" />
  </Svg>
);
const LayersIcon = () => <Svg s={20}><path d="M1 2V11L10 22L23 17V9L10 14Z" fill="#fff" stroke="#222" /><path d="M1 8V11L10 22L23 17V14L10 19Z" fill="#2b3f96" /><path d="M1 2L15 1L23 9L10 14Z" fill="#f15a24" stroke="#7d2a10" strokeWidth=".7" /></Svg>;
const DisplayIcon = () => <Svg s={19}><rect x="1" y="2" width="22" height="16" fill="#888" stroke="#111" strokeWidth="2" /><path d="M8 19H16L18 23H6Z" fill="#bbb" stroke="#444" /></Svg>;
const HelpPage = () => <Svg s={19}><rect x="1" y="1" width="22" height="22" fill="#e9eefb" stroke="#4f63ad" /><path d="M1 1H23V5H1Z" fill="#7d93dd" /><circle cx="12" cy="14" r="7" fill="#3156c9" /><path d="M9 12Q9 9 12 9T15 12Q15 14 12 15M12 17V19" stroke="#fff" strokeWidth="2" /></Svg>;
const Tube = () => <Svg s={25}><path d="M2 17L8 14L14 4L21 1L23 6L19 14L10 22L4 23Z" fill="#ececec" stroke="#222" strokeWidth="1.4" /><path d="M9 13L14 5L20 9L15 16Z" fill="#f0753a" stroke="#222" /></Svg>;
const Checker = () => <Svg s={25}><path d="M3 10L13 2L20 2L22 7L15 11L21 14L12 23L3 17Z" fill="#fff" stroke="#222" strokeWidth="1.4" /><path d="M6 9L10 5L13 9L9 12ZM14 3L19 4L16 8ZM11 14L16 13L14 18ZM4 13L8 13L11 18L9 20ZM15 19L19 15L16 14Z" fill="#ee4a30" /></Svg>;
const PowerIcon = () => <Svg s={28}><path d="M7 3A10.500 10.500 0 1 0 17 3" stroke="#12ab3c" strokeWidth="2.2" /><path d="M12 2V12" stroke="#12933c" strokeWidth="3.4" /></Svg>;
const CubeIcon = () => <Svg s={26}><path d="M1 5Q3 1 12 1Q22 1 23 4L22 18L15 23Q4 23 2 18Z" fill="#ea97e6" stroke="#3d1a3b" /><path d="M1 5Q3 1 12 1Q22 1 23 4L14 7Z" fill="#fbd3f8" stroke="#3d1a3b" /><path d="M14 7L23 4L22 18L15 23Z" fill="#b052ab" stroke="#3d1a3b" /><path d="M2 12L14 15L22 11M7 6L8 21M7 2L18 5M18 6V20" stroke="#3d1a3b" /></Svg>;
const ModifyIcon = () => <Svg s={26}><path d="M1 7L7 3L12 9L16 1L19 10L23 16L9 23L5 14Z" fill="#ee86e8" stroke="#3d1a3b" strokeWidth="1.2" strokeDasharray="3 1" /><path d="M5 14L12 9L19 10M9 23L15 15L12 9M12 17L21 13M3 9L9 5" stroke="#5c2259" /></Svg>;
const UtilIcon = () => <Svg s={28}><circle cx="12" cy="13" r="9" stroke="#5d1a6b" strokeWidth="4.5" strokeDasharray="4 3.07" /><circle cx="12" cy="13" r="9" stroke="#d76bdc" strokeWidth="3" strokeDasharray="3 4.07" strokeDashoffset="-.5" /><circle cx="12" cy="13" r="7.8" fill="#d76bdc" /><path d="M9 3H15V13Q12 15 9 13Z" fill="#8a8a8a" stroke="#333" /></Svg>;

/* ---------- 3D scene ---------- */
type Pt = [number, number];
const ground = (x: number, y: number): Pt => {
  const w = 1 + 0.1334 * x + 0.3232 * y;
  return [(892 * x + 146.9 * y + 1130) / w, (-55.4 * x - 133.1 * y + 927) / w];
};
const seg = (a: Pt, b: Pt) => `M${a[0].toFixed(1)} ${a[1].toFixed(1)}L${b[0].toFixed(1)} ${b[1].toFixed(1)}`;
const gridPath = (step: number, skip: number) => {
  let d = "";
  const n = Math.round(1 / step);
  for (let i = -n; i <= n; i++) {
    if (skip && i % skip === 0) continue;
    d += seg(ground(i * step, -1), ground(i * step, 1)) + seg(ground(-1, i * step), ground(1, i * step));
  }
  return d;
};
const toScene = (x: number, y: number): Pt => [900 + x / 1.742, 480 + y / 3];
const smooth = (raw: number[], closed = false) => {
  const p: Pt[] = [];
  for (let i = 0; i < raw.length; i += 2) p.push(toScene(raw[i], raw[i + 1]));
  const n = p.length;
  const at = (i: number) => (closed ? p[(i + n) % n] : p[Math.max(0, Math.min(n - 1, i))]);
  let d = `M${p[0][0].toFixed(1)} ${p[0][1].toFixed(1)}`;
  for (let i = 0; i < (closed ? n : n - 1); i++) {
    const [a, b, c, e] = [at(i - 1), at(i), at(i + 1), at(i + 2)];
    d += `C${(b[0] + (c[0] - a[0]) / 6).toFixed(1)} ${(b[1] + (c[1] - a[1]) / 6).toFixed(1)} ${(c[0] - (e[0] - b[0]) / 6).toFixed(1)} ${(c[1] - (e[1] - b[1]) / 6).toFixed(1)} ${c[0].toFixed(1)} ${c[1].toFixed(1)}`;
  }
  return d;
};
const PLATE = [222, 325, 300, 278, 408, 240, 490, 205, 650, 160, 880, 100, 980, 81, 1025, 90, 1060, 120, 1150, 220, 1250, 370, 1350, 530, 1420, 650, 1443, 720, 1443, 770, 1400, 820, 1250, 910, 1100, 975, 900, 1050, 700, 1125, 580, 1165, 520, 1165, 460, 1130, 400, 1030, 330, 880, 270, 700, 225, 520, 210, 400];
const RIM = [425, 1070, 475, 1122, 520, 1140, 600, 1132, 800, 1058, 1000, 983, 1200, 893, 1400, 796, 1443, 745, 1443, 770, 1400, 820, 1250, 910, 1100, 975, 900, 1050, 700, 1125, 580, 1165, 520, 1165, 460, 1130];
const RIDGES: [number[], number[]][] = [
  [[315, 490, 400, 405, 500, 315, 620, 250, 720, 218, 860, 208, 980, 222, 1085, 238], [960, 237, 830, 235, 720, 251, 600, 294, 500, 352, 415, 425]],
  [[325, 590, 415, 510, 500, 435, 640, 350, 780, 310, 900, 296, 1020, 298, 1152, 312], [1050, 323, 900, 328, 780, 350, 640, 400, 500, 487, 420, 545]],
  [[355, 702, 425, 660, 500, 618, 700, 550, 900, 480, 1050, 425, 1150, 400, 1215, 402], [1120, 438, 960, 502, 850, 557, 700, 608, 500, 664, 415, 697]],
  [[410, 807, 500, 770, 650, 760, 750, 757, 850, 735, 950, 695, 1040, 640, 1110, 570, 1180, 525, 1262, 498], [1220, 540, 1150, 615, 1060, 695, 950, 755, 850, 790, 730, 810, 500, 807]],
  [[438, 857, 500, 830, 620, 824, 740, 828, 850, 820, 980, 775, 1080, 710, 1150, 630, 1220, 575, 1280, 545], [1230, 600, 1160, 685, 1080, 770, 960, 840, 850, 875, 740, 878, 530, 862]],
  [[470, 895, 560, 873, 720, 880, 840, 880, 960, 850, 1070, 800, 1150, 710, 1220, 640, 1290, 592], [1240, 660, 1150, 770, 1050, 850, 940, 895, 800, 922, 600, 907]],
  [[570, 965, 640, 950, 780, 948, 900, 930, 1000, 900, 1120, 825, 1200, 750, 1287, 690], [1210, 770, 1130, 840, 1010, 915, 880, 955, 760, 970]],
];
const NODES = [117, 317, 127, 346, 135, 377, 144, 405, 154, 433, 162, 465, 170, 493, 180, 521, 188, 556, 201, 592, 213, 634, 225, 676, 239, 721, 254, 768, 268, 814, 280, 856, 292, 897, 303, 933, 315, 971, 327, 1013, 340, 1052, 352, 1098, 366, 1144, 380, 1190];
const NODE_ENDS = [220, 332, 210, 372, 210, 405, 214, 434, 216, 466, 222, 498, 230, 533, 240, 570, 250, 615, 264, 660, 277, 712, 292, 762, 309, 810, 324, 852, 340, 893, 354, 928, 368, 966, 386, 1002, 405, 1044, 426, 1086, 452, 1130, 520, 1168];
const RIGHT_LINES = [1113, 73, 1000, 88, 1130, 97, 1048, 107, 1145, 121, 1075, 130, 1162, 145, 1092, 153, 1177, 168, 1110, 176, 1195, 193, 1130, 200, 1212, 217, 1152, 227, 1231, 248, 1173, 256, 1253, 281, 1202, 290, 1278, 316, 1228, 331, 1303, 353, 1256, 374, 1330, 391, 1284, 415, 1354, 427, 1308, 455, 1376, 460, 1332, 492, 1397, 492, 1352, 525, 1419, 522, 1368, 560, 1438, 552, 1387, 591, 1460, 584, 1404, 624, 1483, 616, 1420, 660, 1505, 650, 1438, 698, 1530, 686, 1443, 747];

const isoLines = () => {
  let d = smooth([117, 317, 300, 225, 408, 180, 490, 150, 640, 105, 800, 68, 940, 43, 1080, 24]);
  d += smooth([127, 346, 300, 262, 410, 205, 492, 178, 650, 130, 850, 83, 980, 63, 1097, 48]);
  d += smooth([370, 250, 410, 233]) + smooth([492, 198, 650, 150, 880, 95]);
  d += smooth([1554, 722, 1480, 780, 1400, 835, 1250, 922, 1000, 1035, 850, 1090, 610, 1158]);
  for (let i = 2; i < 24; i++) d += seg(toScene(NODES[i * 2], NODES[i * 2 + 1]), toScene(NODE_ENDS[i * 2 - 4], NODE_ENDS[i * 2 - 3]));
  for (let i = 0; i < RIGHT_LINES.length; i += 4) d += seg(toScene(RIGHT_LINES[i], RIGHT_LINES[i + 1]), toScene(RIGHT_LINES[i + 2], RIGHT_LINES[i + 3]));
  return d;
};
const poly = (...p: Pt[]) => p.map((q) => q.join(" ")).join(" ");

const Scene = () => (
  <svg className="scene" viewBox="602 118 1524 951" preserveAspectRatio="xMidYMid slice" role="img" aria-label="Perspective view of the ball mill over the part">
    <defs>
      <linearGradient id="shank"><stop offset="0" stopColor="#2a2a2a" /><stop offset=".15" stopColor="#3c3c3c" /><stop offset=".5" stopColor="#363636" /><stop offset=".68" stopColor="#242424" /><stop offset=".85" stopColor="#0c0c0c" /><stop offset="1" stopColor="#000" /></linearGradient>
      <linearGradient id="tip"><stop offset="0" stopColor="#6c6c6c" /><stop offset=".3" stopColor="#a0a0a0" /><stop offset=".6" stopColor="#858585" /><stop offset=".8" stopColor="#4a4a4a" /><stop offset="1" stopColor="#000" /></linearGradient>
      <linearGradient id="plate" x1="0" y1="0" x2="0" y2="1"><stop offset="0" stopColor="#9a9a9a" /><stop offset="1" stopColor="#a9a9a9" /></linearGradient>
      <pattern id="grooves" width="4" height="4" patternUnits="userSpaceOnUse" patternTransform="rotate(-24)"><path d="M0 0V4" stroke="#8c8c8c" strokeWidth="1" opacity=".35" /></pattern>
      <filter id="soft" x="-5%" y="-10%" width="110%" height="120%"><feGaussianBlur stdDeviation="2.5" /></filter>
      {RIDGES.map(([up, low], i) => <clipPath id={`ridge${i}`} key={i}><path d={smooth([...up, ...low], true)} /></clipPath>)}
    </defs>
    <polygon points={poly(ground(-1, -1), ground(1, -1), ground(1, 1), ground(-1, 1))} fill="#abaeb1" />
    <path d={gridPath(0.01, 10)} stroke="#a0a5a9" strokeWidth=".5" fill="none" />
    <path d={gridPath(0.1, 0)} stroke="#92979a" strokeWidth="1.1" fill="none" />
    <path d={seg(ground(0, 0), ground(1, 0))} stroke="#b45550" strokeWidth="1.6" />
    <path d={seg(ground(0, 0), ground(0, 1))} stroke="#45a45a" strokeWidth="1.6" />
    <path d={isoLines()} stroke="#fca81f" strokeWidth="2.4" fill="none" />
    <path d={smooth(PLATE, true)} fill="url(#plate)" />
    <path d={smooth(PLATE, true)} fill="url(#grooves)" />
    <path d={smooth([210, 400, 225, 520, 270, 700, 330, 880, 400, 1030, 430, 1080])} stroke="#8b8b8b" strokeWidth="2.5" fill="none" />
    <path d={smooth(RIM, true)} fill="#d0d0d0" />
    {RIDGES.map(([up, low], i) => (
      <g key={i}>
        <path d={smooth([...up, ...low], true)} fill="#848484" transform="translate(1 1.5)" opacity={i > 2 ? 1 : 0.5} />
        <path d={smooth([...up, ...low], true)} fill={i === 6 ? "#adadad" : i > 2 ? "#a2a2a2" : "#b2b2b2"} />
        <g clipPath={`url(#ridge${i})`}>
          <path d={smooth(up)} fill="none" stroke={i === 6 ? "#bbb" : i === 0 ? "#cdcdcd" : "#d6d6d6"} strokeWidth={i === 6 ? 4 : i > 3 ? 14 : i === 0 ? 9 : 22} filter="url(#soft)" />
        </g>
      </g>
    ))}
    {Array.from({ length: 24 }, (_, i) => {
      const [x, y] = toScene(NODES[i * 2], NODES[i * 2 + 1]);
      return <rect key={i} x={x - 3} y={y - 3} width="6" height="6" fill="#fff" stroke="#fca81f" strokeWidth="1.5" />;
    })}
    {/* cutter */}
    <path d="M1134 498H1180L1188 708Q1166 714 1145 707Z" fill="url(#shank)" />
    <path d="M1139 612Q1162 616 1184 608L1188 708Q1166 714 1145 707Z" fill="#000" opacity=".18" />
    <path d="M1145 707Q1166 714 1188 708L1190 745Q1188 763 1169 764Q1152 763 1148 745Z" fill="url(#tip)" />
    <path d="M1150 750Q1158 764 1170 764Q1186 763 1189 745Q1182 758 1170 759Q1158 759 1150 750Z" fill="#111" opacity=".7" />
    {/* holder */}
    <polygon points={poly([1065, 118], [1044, 172], [1029, 245], [1026, 327], [1036, 430], [1040, 482], [1049, 491], [1062, 499], [1229, 499], [1253, 488], [1266, 476], [1269, 462], [1267, 327], [1265, 288], [1257, 207], [1246, 170], [1237, 140], [1226, 118])} fill="#04046a" />
    <polygon points={poly([1065, 118], [1044, 172], [1029, 245], [1026, 327], [1030, 380], [1035, 415], [1047, 453], [1062, 443], [1034, 245], [1049, 172])} fill="#000" />
    <polygon points={poly([1045, 170], [1034, 245], [1062, 443], [1089, 431], [1049, 170])} fill="#000008" />
    <polygon points={poly([1065, 118], [1047, 168], [1089, 431], [1121, 424], [1071, 118])} fill="#00002e" />
    <polygon points={poly([1071, 118], [1121, 424], [1156, 421], [1105, 118])} fill="#00004e" />
    <polygon points={poly([1105, 118], [1156, 421], [1190, 422], [1143, 118])} fill="#04045e" />
    <polygon points={poly([1143, 118], [1190, 422], [1246, 435], [1212, 118])} fill="#04046c" />
    <polygon points={poly([1212, 118], [1246, 435], [1262, 370], [1265, 288], [1257, 207], [1237, 140], [1226, 118])} fill="#04045e" />
    <polygon points={poly([1240, 150], [1257, 207], [1265, 288], [1264, 340], [1258, 330], [1250, 240])} fill="#00003e" opacity=".7" />
    <polygon points={poly([1266, 290], [1263, 377], [1249, 448], [1229, 499], [1253, 488], [1266, 476], [1269, 462], [1267, 327])} fill="#000" />
    <path d="M1170 459Q1162 456 1152 457Q1131 459 1131 466Q1133 474 1152 475Q1173 474 1177 466L1154 465Z" fill="#3c3c3c" />
    {/* gumball */}
    <path d="M1130 927L1122 908" stroke="#1a8a2c" strokeWidth="2" /><path d="M1117 901L1127 905L1124 915Z" fill="#0fe03a" stroke="#0a5a18" strokeWidth=".7" />
    <path d="M1131 927V903" stroke="#1c1ca0" strokeWidth="2.5" /><path d="M1129 889L1134 904H1124Z" fill="#1f22d0" stroke="#0c0c70" strokeWidth=".6" />
    <path d="M1131 927L1162 918" stroke="#b51a0a" strokeWidth="2.5" /><path d="M1176 916L1158 915L1162 923Z" fill="#e62410" stroke="#7d0f06" strokeWidth=".6" />
    <ellipse cx="1130.5" cy="927" rx="3.5" ry="4" fill="#1a1cc0" stroke="#0a0a60" />
    {/* world axes */}
    <path d="M645 992V1026L675 1021M645 1026L637 1018" stroke="#6a6a6a" fill="none" />
    <g fill="#666" fontFamily={SANS} fontSize="15"><text x="648" y="998">z</text><text x="679" y="1023">x</text><text x="633" y="1014">y</text></g>
  </svg>
);

/* ---------- page ---------- */
const Tools = ({ list }: { list: Glyph[] }) => (
  <>{list.map((g, i) => (g.n === "|" ? <Divider key={i} /> : <IconButton key={i} aria-label={g.n}><LineIcon i={g} /></IconButton>))}</>
);
const TOP_TABS = ["Standard", "CPlanes", "Set View", "Display", "Select", "Viewport Layout", "Visibility", "Transform", "Curve Tools", "Surface Tools", "Solid Tools", "Mesh Tools", "Render Tools", "Drafting", "New in V5", "New in V4"];
const OSNAPS: [string, number][] = [["End", 1], ["Near", 1], ["Point", 1], ["Mid", 1], ["Cen", 1], ["Int", 1], ["Perp", 0], ["Tan", 0], ["Quad", 0], ["Knot", 0], ["Vertex", 0], ["Project", 2], ["Disable", 2]];
const STATUS: [string, number, boolean?][] = [["Grid Snap", 89], ["Ortho", 55, true], ["Planar", 63, true], ["Osnap", 64, true], ["SmartTrack", 99, true], ["Gumball", 77, true], ["Record History", 128], ["Filter", 53]];

const Chevron = () => <CellEnd><svg width="11" height="7" viewBox="0 0 11 7"><path d="M1 1L5.500 5.500L10 1" fill="none" stroke="#666" strokeWidth="1.3" /></svg></CellEnd>;
const Drop = ({ name, value, mark }: { name: string; value: string; mark?: ReactNode }) => {
  const id = name.replace(" ", "-");
  return (
    <PropRow>
      <PropName htmlFor={id}>{name}</PropName>
      <PropValue>{mark}<PropSelect id={id} defaultValue={value}><option>{value}</option></PropSelect><Chevron /></PropValue>
    </PropRow>
  );
};

export default function App() {
  return (
    <Page>
      <Global />
      <TopBar>
        <ToolTabsArea>
          <TabStrip>
            {TOP_TABS.map((t) => <ToolTab key={t} $on={t === "Curve Tools"}>{t}</ToolTab>)}
            <StripGear aria-label="Toolbar options"><Gear s={18} c="#a5a8ad" /></StripGear>
          </TabStrip>
          <ToolRow><Tools list={CURVE_TOOLS} /></ToolRow>
        </ToolTabsArea>
        <ActionArea>
          <Action><PowerIcon />Edit mode</Action>
          <Action $menu><CubeIcon />Create</Action>
          <Action $menu><ModifyIcon />Modify</Action>
          <Action $menu><UtilIcon />Utility</Action>
          <Action $menu>All Command</Action>
        </ActionArea>
      </TopBar>
      <SolidRow><Tools list={SOLIDS} /></SolidRow>

      <Workspace>
        <ToolColumn>{MODEL_TOOLS.map((g) => <ToolCell key={g.n} aria-label={g.n}><LineIcon i={g} size={24} /></ToolCell>)}</ToolColumn>

        <Panel $w={295} $gap={4}>
          <RibbonTabs>
            <Toggle $on $w={40}>MILL</Toggle>
            <Toggle $on $w={29} aria-label="Tooling"><Kit /></Toggle>
            <RibbonTab>Progr</RibbonTab>
            <RibbonTab $on>Simul</RibbonTab>
            <RibbonIcons>
              <button aria-label="Collapse"><Chevrons /></button>
              <button aria-label="Build"><Hammer /></button>
              <button aria-label="More"><Caret w={7} /></button>
              <button aria-label="Settings"><Gear s={20} /></button>
              <button aria-label="Help"><Help /></button>
            </RibbonIcons>
          </RibbonTabs>
          <Ribbon>
            <OptionsGroup $w={158}>
              <Preferences><PrefIcon />Preferences</Preferences>
              <SliderBox>
                <Slider type="range" min={0} max={9} defaultValue={9} aria-label="Simulation speed" />
                <Ticks>{Array.from({ length: 10 }, (_, i) => <i key={i} />)}</Ticks>
              </SliderBox>
              <CheckLabel $gap={6}><PaleCheck type="checkbox" />Simulate by Moves</CheckLabel>
              <OptionsTitle>Options</OptionsTitle>
            </OptionsGroup>
            <RibbonGroup $w={60}><button>Simulate</button><Caret w={6} /></RibbonGroup>
          </Ribbon>
          <Frame>
            <Tree>
              <TreeRow $in={18}><Expander>−</Expander><Dots $w={1} /><Folders /><TreeLabel $bold $gap={4}>Machining Job</TreeLabel></TreeRow>
              <TreeRow $in={50}><Guide /><Dots $w={7} /><MachineIcon /><TreeLabel $gap={11}>Machine - 3 Axis</TreeLabel></TreeRow>
              <TreeRow $in={50}><Guide /><Dots $w={7} /><ReelIcon /><TreeLabel $gap={12}>Post - Mach3-MM</TreeLabel></TreeRow>
              <TreeRow $in={50}><Guide /><Dots $w={7} /><BoxIcon /><TreeLabel $gap={11}>Stock - Box Stock</TreeLabel></TreeRow>
              <TreeRow $in={45}><Expander>−</Expander><Dots $w={2} /><SetupIcon /><TreeLabel $bold $gap={4}>Setup 1</TreeLabel></TreeRow>
              <TreeRow $in={77}><Guide /><Dots $w={7} /><ZeroIcon /><TreeLabel $gap={4}>Work Zero</TreeLabel></TreeRow>
              {["Horizontal Roughing", "Parallel Finishing", "Engraving", "2 1/2 Axis Profiling", "2 1/2 Axis Profiling"].map((t, i) => (
                <TreeRow $in={72} key={i}><Expander>+</Expander><Dots $w={4} /><Folder /><TreeLabel $gap={5} $sel={t === "Engraving"}>{t}</TreeLabel></TreeRow>
              ))}
            </Tree>
            <PanelTools>
              {SPECS.map(([n, on, pic]) => <Toggle key={n} $on={on} aria-label={n}><Spec>{pic}</Spec></Toggle>)}
            </PanelTools>
          </Frame>
          <PanelStatus>GOTO 300/74</PanelStatus>
        </Panel>

        <Panel $w={213} $gap={9}>
          <Frame>
            <LibTabs>
              <LibTab $on><Kit />Tools</LibTab>
              <LibTab><RegionIcon />Region</LibTab>
              <LibArrows>
                <button aria-label="Previous tab"><Arrow open /></button>
                <button aria-label="Next tab"><Arrow /></button>
              </LibArrows>
            </LibTabs>
            <LibRow>
              <LibButton $w={28} aria-label="Holder"><Holder /></LibButton><Divider $h={26} />
              <LibButton aria-label="Load library"><DiskTool kind="load" /></LibButton>
              <LibButton aria-label="Select library"><DiskTool kind="go" /></LibButton>
              <LibButton aria-label="Save library"><DiskTool kind="save" /></LibButton>
              <LibButton aria-label="Unload tool"><UndoTool /></LibButton>
            </LibRow>
            <LibRow $last>
              <LibButton $w={28} aria-label="Tool report"><ReportTool /></LibButton><Divider $h={26} />
              <LibButton aria-label="Create tool"><NewTool /></LibButton>
            </LibRow>
            <ToolTree>
              <TreeRow $in={17}><Expander>−</Expander><Dots $w={3} /><TreeKit /><TreeLabel $bold $gap={3}>Tools</TreeLabel></TreeRow>
              {["FlatMill1", "BALL MILL 6 MM", "FlatMill2"].map((t) => (
                <TreeRow $in={44} key={t}><Expander>+</Expander><Dots $w={2} /><TreeMill /><TreeLabel $gap={2} $sel={t[0] === "B"}>{t}</TreeLabel></TreeRow>
              ))}
            </ToolTree>
            <PanelTools>
              <SortSelect aria-label="Sort tools" defaultValue="No Sort"><option>No Sort</option></SortSelect>
              <Toggle aria-label="Sort order">
                <svg width="22" height="22" viewBox="0 0 22 22"><path d="M4 16V3M1 6L4 2L7 6M19 8V20M16 17L19 21L22 17" fill="none" stroke="#222" strokeWidth="1.5" /><text x="7" y="11" fontSize="11" fontWeight="700" fill="#2b50a8" fontFamily={SANS}>A</text><text x="8" y="21" fontSize="11" fontWeight="700" fill="#a02b2b" fontFamily={SANS}>Z</text></svg>
              </Toggle>
              <Divider $h={20} />
              <Toggle aria-label="Show tool"><Spec><path d="M4 2H14V6L12 14H7V6Z" fill="#b9bcbf" stroke="#777" /><path d="M17 3L21 6L14 20" stroke="#2fd6d0" strokeWidth="4" /></Spec></Toggle>
            </PanelTools>
          </Frame>
          <PanelStatus>BALL MILL 6 MM | #2 | Dia:6, CRa</PanelStatus>
        </Panel>

        <ViewportColumn>
          <Viewport>
            <Scene />
            <ViewTitle>Perspective<ViewMenu><Caret w={10} /></ViewMenu></ViewTitle>
          </Viewport>
          <ViewTabs>
            <ViewTab $on>Perspective</ViewTab><ViewTab>Top</ViewTab><ViewTab>Front</ViewTab><ViewTab>Right</ViewTab>
            <ViewTab aria-label="Add viewport"><svg width="14" height="14" viewBox="0 0 14 14"><path d="M5 1H9V5H13V9H9V13H5V9H1V5H5Z" fill="#f4f4f4" stroke="#8a8d92" /></svg></ViewTab>
          </ViewTabs>
        </ViewportColumn>

        <PropPanel>
          <PropTabs>
            <PropTab $on><ColorWheel s={18} />Pro...</PropTab>
            <PropTab><LayersIcon />Lay...</PropTab>
            <PropTab><DisplayIcon />Dis...</PropTab>
            <PropTab><HelpPage />Help</PropTab>
            <StripGear aria-label="Panel options"><Gear s={17} c="#b0b2b6" /></StripGear>
          </PropTabs>
          <PropBody>
            <PageButtons>
              <PageButton $on aria-label="Object"><ColorWheel s={24} /></PageButton>
              <PageButton aria-label="Material"><Tube /></PageButton>
              <PageButton aria-label="Texture mapping"><Checker /></PageButton>
            </PageButtons>
            <GroupTitle>Object</GroupTitle>
            <PropRow><PropName htmlFor="type">Type</PropName><PropValue><PropInput id="type" readOnly defaultValue="24 open curves" /></PropValue></PropRow>
            <PropRow><PropName htmlFor="name">Name</PropName><PropValue><PropInput id="name" /></PropValue></PropRow>
            <Drop name="Layer" value="Isocurves" mark={<Swatch $c="#1f35ff" />} />
            <Drop name="Display Color" value="By Layer" mark={<Swatch $c="#fff" />} />
            <Drop name="Linetype" value="By Layer" />
            <Drop name="Print Color" value="By Layer" mark={<Diamond />} />
            <Drop name="Print Width" value="By Layer" />
            <PropRow><PropName htmlFor="link">Hyperlink</PropName><PropValue><PropInput id="link" /><CellButton aria-label="Edit hyperlink">...</CellButton></PropValue></PropRow>
            <GroupTitle>Render Mesh Settings</GroupTitle>
            <PropRow $off><PropName htmlFor="mesh">Custom Mesh</PropName><PropValue $off><WhiteCheck id="mesh" type="checkbox" disabled /></PropValue></PropRow>
            <PropRow $off><PropName htmlFor="adjust">Settings</PropName><PropValue $off><AdjustButton id="adjust" disabled>Adjust...</AdjustButton></PropValue></PropRow>
            <GroupTitle>Rendering</GroupTitle>
            <PropRow><PropName htmlFor="casts">Casts shadows</PropName><PropValue><Check id="casts" type="checkbox" defaultChecked /></PropValue></PropRow>
            <PropRow><PropName htmlFor="gets">Receives shadows</PropName><PropValue><Check id="gets" type="checkbox" defaultChecked /></PropValue></PropRow>
            <GroupTitle>Isocurve Density</GroupTitle>
            <PropRow $off><PropName htmlFor="density">Density</PropName><PropValue $off><PropInput id="density" disabled /><Spin><svg width="7" height="13" viewBox="0 0 7 13"><path d="M0 4H7L3.500 0ZM0 9H7L3.500 13Z" fill="#777" /></svg></Spin></PropValue></PropRow>
            <PropRow $off><PropName htmlFor="iso">Show surface iso...</PropName><PropValue $off><WhiteCheck id="iso" type="checkbox" disabled />Visible</PropValue></PropRow>
            <PanelButtons>
              <WideButton><u>M</u>atch</WideButton>
              <WideButton><u>D</u>etails...</WideButton>
            </PanelButtons>
          </PropBody>
        </PropPanel>
      </Workspace>

      <OsnapBar>
        {OSNAPS.map(([t, s]) => (
          <CheckLabel key={t}><Check type="checkbox" defaultChecked={s === 1} disabled={s === 2} />{t}</CheckLabel>
        ))}
      </OsnapBar>
      <StatusBar>
        <StatusCell $w={66}>CPlane</StatusCell>
        <StatusCell $w={103}>x 0.420</StatusCell>
        <StatusCell $w={103}>y 195.289</StatusCell>
        <StatusCell $w={103}>z 0.000</StatusCell>
        <StatusCell $w={103}>Millimeters</StatusCell>
        <StatusCell $w={204} $left><StatusSwatch />Isocurves</StatusCell>
        {STATUS.map(([t, w, on]) => <StatusCell key={t} $w={w} $on={on}>{t}</StatusCell>)}
        <StatusCell $left>Available physical memory: 4285 MB</StatusCell>
        <StatusEnd />
      </StatusBar>
    </Page>
  );
}
